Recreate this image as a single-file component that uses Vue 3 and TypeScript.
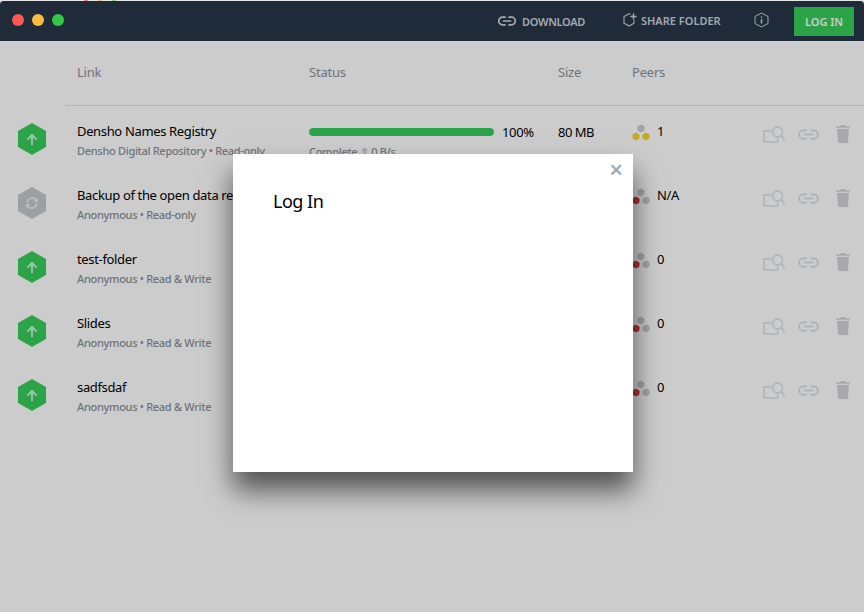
<script setup lang="ts">
interface Row {
  name: string
  sub: string
  sync: boolean
  peers: string
  tone: string
  progress?: number
  size?: string
  status?: string
}
const rows: Row[] = [
  { name: 'Densho Names Registry', sub: 'Densho Digital Repository • Read-only', sync: false, peers: '1', tone: 'gold', progress: 100, size: '80 MB', status: 'Complete ⇧ 0 B/s' },
  { name: 'Backup of the open data repository', sub: 'Anonymous • Read-only', sync: true, peers: 'N/A', tone: 'red' },
  { name: 'test-folder', sub: 'Anonymous • Read & Write', sync: false, peers: '0', tone: 'red' },
  { name: 'Slides', sub: 'Anonymous • Read & Write', sync: false, peers: '0', tone: 'red' },
  { name: 'sadfsdaf', sub: 'Anonymous • Read & Write', sync: false, peers: '0', tone: 'red' },
]
</script>

<template>
  <div class="app">
    <div class="strip">
      <span class="bit bit-red"></span>
      <span class="bit bit-yellow"></span>
      <span class="bit bit-green"></span>
    </div>
    <header class="bar">
      <div class="lights">
        <span class="light l-red"></span>
        <span class="light l-yellow"></span>
        <span class="light l-green"></span>
      </div>
      <a class="nav nav-download">
        <svg width="18" height="10" viewBox="0 0 18 10" fill="none" stroke="currentColor" stroke-width="1.700" stroke-linecap="round">
          <path d="M7 1.200H4.500a3.800 3.800 0 0 0 0 7.600H7M11 1.200h2.500a3.800 3.800 0 0 1 0 7.600H11M5.500 5h7" />
        </svg>
        <span class="dl-text">DOWNLOAD</span>
      </a>
      <a class="nav nav-share">
        <svg width="14" height="14" viewBox="0 0 14 14" fill="none" stroke="currentColor" stroke-width="1.100" stroke-linecap="round" stroke-linejoin="round">
          <path d="M7 1.300 6 .8 1 3.600v6.600l5 2.900 5-2.900V7.500" />
          <path d="M10.500 1v5M8 3.500h5" stroke-width="1.500" />
        </svg>
        SHARE FOLDER
      </a>
      <a class="nav nav-info">
        <svg width="15" height="16" viewBox="0 0 15 16" fill="none" stroke="currentColor" stroke-width="1" stroke-linejoin="round">
          <path d="M7.500 1 14 4.500v7L7.500 15 1 11.500v-7z" />
          <path d="M7.500 7v4.400M7.500 4.400v1.300" stroke-width="1.500" />
        </svg>
      </a>
      <button class="login">LOG IN</button>
    </header>

    <main class="table">
      <div class="head">
        <span>Link</span>
        <span>Status</span>
        <span>Size</span>
        <span>Peers</span>
      </div>
      <div v-for="row in rows" :key="row.name" class="row">
        <div class="cell-icon">
          <svg width="30" height="32" viewBox="0 0 30 32">
            <path d="M15 0 29 8v16l-14 8-14-8V8z" :fill="row.sync ? '#c2c8cc' : '#36cd5b'" />
            <g v-if="!row.sync" fill="none" stroke="#ffffff" stroke-opacity=".75" stroke-width="1.800" stroke-linecap="round" stroke-linejoin="round">
              <path d="M15 21.500V12.500M11 16l4-4 4 4" />
            </g>
            <g v-else fill="none" stroke="#ffffff" stroke-opacity=".6" stroke-width="1.800" stroke-linecap="round" stroke-linejoin="round">
              <path d="M10.500 15a4.800 4.800 0 0 1 8.500-2.200l1 1M19.500 17a4.800 4.800 0 0 1-8.500 2.200l-1-1" />
              <path d="M20 11.500v2.500h-2.500M10 20.500V18h2.500" stroke-width="1.300" />
            </g>
          </svg>
        </div>
        <div class="cell-link">
          <div class="name">{{ row.name }}</div>
          <div class="sub">{{ row.sub }}</div>
        </div>
        <div class="cell-status">
          <template v-if="row.progress">
            <div class="progress-line">
              <div class="track"><div class="fill" :style="{ width: row.progress + '%' }"></div></div>
              <span class="pct">{{ row.progress }}%</span>
            </div>
            <div class="sub">{{ row.status }}</div>
          </template>
        </div>
        <div class="cell-size">{{ row.size }}</div>
        <div class="cell-peers">
          <svg width="20" height="18" viewBox="0 0 20 18">
            <path d="M10 0.500 13.500 2.500v4L10 8.500l-3.500-2v-4z" fill="#c8ccd1" />
            <path d="M5 8.500 8.500 10.500v4L5 16.500l-3.500-2v-4z" :fill="row.tone === 'gold' ? '#f6d32c' : '#d73c3c'" />
            <path d="M15 8.500 18.500 10.500v4L15 16.500l-3.500-2v-4z" :fill="row.tone === 'gold' ? '#f6d32c' : '#c8ccd1'" />
          </svg>
          <span>{{ row.peers }}</span>
        </div>
        <div class="cell-actions">
          <svg class="act-folder" width="22" height="17" viewBox="0 0 22 17" fill="none" stroke="#dde0e3" stroke-width="1.500" stroke-linejoin="round" stroke-linecap="round">
            <path d="M7.500 5H1v11h14l-.5-4.200" />
            <circle cx="14.500" cy="6" r="5" />
            <path d="M18.200 9.700 21.500 13.300" stroke-width="1.800" />
          </svg>
          <svg class="act-link" width="21" height="11" viewBox="0 0 21 11" fill="none" stroke="#dde0e3" stroke-width="2" stroke-linecap="round">
            <path d="M8 1.200H5.500a4.300 4.300 0 0 0 0 8.600H8M13 1.200h2.500a4.300 4.300 0 0 1 0 8.600H13M6.500 5.500h8" />
          </svg>
          <svg class="act-trash" width="14" height="18" viewBox="0 0 14 18" fill="#cfd3d8">
            <path d="M5 0h4l.6 1.200H14v1.600H0V1.200h4.400zM1.200 4h11.600l-.7 13a1 1 0 0 1-1 1H2.900a1 1 0 0 1-1-1z" />
          </svg>
        </div>
      </div>
    </main>

    <div class="overlay">
      <section class="modal">
        <span class="close">✕</span>
        <h2>Log In</h2>
      </section>
    </div>
  </div>
</template>

<style>
html, body { margin: 0; background: #fff; }
</style>

<style scoped>
.app {
  position: relative;
  width: 864px;
  height: 612px;
  overflow: hidden;
  background: #fff;
  font-family: "Noto Sans", "Liberation Sans", sans-serif;
  font-size: 13px;
  letter-spacing: -0.35px;
  color: #000;
}
.strip {
  display: flex;
  gap: 10px;
  height: 1px;
  padding-left: 84px;
  background: #e6e6e6;
}
.bit { width: 4px; height: 1px; }
.bit-red { background: #e08a85; }
.bit-yellow { background: #e4c58d; }
.bit-green { background: #8fcb98; }
.bar {
  height: 40px;
  background: #293649;
  border-radius: 4px 4px 0 0;
  display: flex;
  align-items: center;
  color: #ccd2dc;
  font-weight: 600;
  font-size: 11px;
  letter-spacing: 0;
}
.lights { display: flex; gap: 8px; margin-left: 12px; position: relative; z-index: 3; margin-top: -2px; }
.light { width: 12px; height: 12px; border-radius: 50%; }
.l-red { background: #fc5753; }
.l-yellow { background: #fdbc40; }
.l-green { background: #33c748; }
.nav { display: flex; align-items: center; gap: 6px; white-space: nowrap; }
.dl-text { letter-spacing: -0.3px; }
.nav-download { margin-left: 434px; width: 125px; }
.nav-share { gap: 4px; width: 131px; margin-top: -2px; }
.nav-info { width: 40px; margin-top: -2px; }
.login {
  width: 60px;
  height: 29px;
  margin-top: 1px;
  border: 0;
  padding: 0;
  background: #36cd5b;
  color: #fff;
  font: inherit;
}
.head, .row {
  display: grid;
  grid-template-columns: 77px 232px 249px 74px 110px 1fr;
}
.head {
  height: 64px;
  align-items: center;
  color: #89909a;
  position: relative;
  padding-bottom: 2px;
  box-sizing: border-box;
  letter-spacing: -0.2px;
}
.head::after {
  content: "";
  position: absolute;
  left: 65px;
  right: 0;
  bottom: -1px;
  border-bottom: 1px solid #e0e2e5;
}
.head span:first-child { grid-column: 2; }
.row { height: 64px; align-items: start; }
.cell-icon { padding: 18px 0 0 17px; }
.cell-link { padding-top: 16px; }
.cell-status { padding-top: 17px; }
.row:first-of-type .cell-link { padding-top: 17px; }
.name { line-height: 20px; white-space: nowrap; }
.sub {
  font-size: 11px;
  font-weight: 500;
  line-height: 16px;
  margin-top: 2px;
  color: #8b909a;
  white-space: nowrap;
  letter-spacing: -0.3px;
}
.progress-line { display: flex; align-items: center; gap: 8px; height: 20px; }
.track { width: 185px; height: 8px; border-radius: 4px; background: #e0e2e5; overflow: hidden; }
.fill { height: 100%; background: #36cd5b; border-radius: 4px; }
.cell-size { padding-top: 17px; line-height: 20px; letter-spacing: -0.5px; }
.cell-peers { display: flex; gap: 6px; padding-top: 18px; line-height: 16px; margin-left: -1px; }
.row:first-of-type .cell-peers { padding-top: 19px; }
.cell-peers svg { margin-top: 1px; }
.cell-actions {
  display: flex;
  align-items: center;
  justify-content: flex-end;
  height: 18px;
  padding: 20px 14px 0 0;
}
.row:first-of-type .cell-actions { padding-top: 21px; }
.act-link { margin: 0 17px 0 13px; }
.overlay { position: absolute; inset: 1px 0 0; background: rgba(0, 0, 0, 0.2); z-index: 2; }
.modal {
  position: absolute;
  left: 233px;
  top: 153px;
  width: 400px;
  height: 318px;
  background: #fff;
  box-shadow: 0 18px 26px rgba(0, 0, 0, 0.6);
  padding: 35px 40px;
  box-sizing: border-box;
}
.modal h2 { margin: 0; font-size: 18px; font-weight: 400; line-height: 24px; letter-spacing: -0.5px; }
.close {
  position: absolute;
  top: 6px;
  right: 10px;
  color: #a3adb5;
  font-size: 17px;
  font-weight: 700;
  line-height: 20px;
}
</style>
